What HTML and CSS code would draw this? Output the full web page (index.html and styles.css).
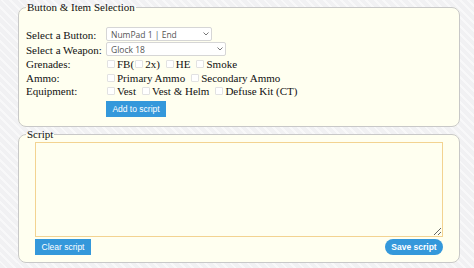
FILE: index.html
```html
<!DOCTYPE html>
<html lang="en">
  <head>
    <meta charset="UTF-8" />
    <meta name="viewport" content="width=device-width, initial-scale=1.0" />
    <title>Script Builder</title>
    <link rel="stylesheet" href="styles.css">
  </head>
  <body>
    <fieldset class="box">
      <legend>Button &amp; Item Selection</legend>
      <div class="form">
        <label class="lbl">Select a Button:</label>
        <div class="sel_wrap">
          <select class="sel sel_btn">
            <option>NumPad 1 | End</option>
          </select>
          <svg class="chev" width="6" height="4" viewBox="0 0 6 4"><path d="M0.5 0.5 L3 3 L5.5 0.5" fill="none" stroke="#777" stroke-width="1"/></svg>
        </div>
        <label class="lbl">Select a Weapon:</label>
        <div class="sel_wrap">
          <select class="sel sel_wpn">
            <option>Glock 18</option>
          </select>
          <svg class="chev" width="6" height="4" viewBox="0 0 6 4"><path d="M0.5 0.5 L3 3 L5.5 0.5" fill="none" stroke="#777" stroke-width="1"/></svg>
        </div>
        <span class="lbl">Grenades:</span>
        <div class="checks">
          <label><input type="checkbox">FB(</label>
          <label><input type="checkbox">2x)</label>
          <label class="sp"><input type="checkbox">HE</label>
          <label class="sp"><input type="checkbox">Smoke</label>
        </div>
        <span class="lbl">Ammo:</span>
        <div class="checks">
          <label><input type="checkbox">Primary Ammo</label>
          <label class="sp"><input type="checkbox">Secondary Ammo</label>
        </div>
        <span class="lbl">Equipment:</span>
        <div class="checks">
          <label><input type="checkbox">Vest</label>
          <label class="sp"><input type="checkbox">Vest &amp; Helm</label>
          <label class="sp"><input type="checkbox">Defuse Kit (CT)</label>
        </div>
        <span></span>
        <div class="add_row">
          <button class="btn">Add to script</button>
        </div>
      </div>
    </fieldset>
    <fieldset class="box box_script">
      <legend>Script</legend>
      <textarea class="script"></textarea>
      <div class="actions">
        <button class="btn">Clear script</button>
        <button class="btn pill">Save script</button>
      </div>
    </fieldset>
  </body>
</html>
```

FILE: styles.css
```css
* {
  box-sizing: border-box;
}

body {
  margin: 0;
  padding: 1px 14px 0 18px;
  background-color: #f1f1f3;
  background-image: repeating-linear-gradient(45deg, rgba(255,255,255,0.5) 0 2px, transparent 2px 6px);
  font-family: "Liberation Serif", "Times New Roman", serif;
  font-size: 11px;
  color: #111;
}

.box {
  margin: 0;
  padding: 0 7px 9px 7px;
  border: 1px solid #c8c8c8;
  border-radius: 8px;
  background-color: #fffff0;
}

.box legend {
  padding: 0 1px;
  line-height: 13px;
  font-size: 11px;
}

.form {
  display: grid;
  grid-template-columns: 80px auto;
  grid-template-rows: 15px 15px 14px 13px 14px auto;
  margin-top: 13px;
  align-items: center;
}

.lbl {
  line-height: 14px;
}

.sel_wrap {
  position: relative;
  height: 15px;
}

.sel {
  appearance: none;
  display: block;
  height: 14px;
  margin: 0;
  padding: 0 2px 0 4px;
  border: 1px solid #d6d6d6;
  border-radius: 2px;
  background-color: #fff;
  font-family: "Open Sans", "DejaVu Sans", sans-serif;
  font-size: 8.5px;
  color: #555;
}

.sel_btn {
  width: 106px;
}

.sel_wpn {
  width: 120px;
}

.chev {
  position: absolute;
  top: 5px;
}

.sel_wrap:nth-child(2) .chev {
  left: 97px;
}

.sel_wrap:nth-child(4) .chev {
  left: 111px;
}

.checks {
  display: flex;
  align-items: center;
  line-height: 14px;
}

.checks label {
  display: flex;
  align-items: center;
}

.checks .sp {
  margin-left: 5px;
}

.checks input {
  appearance: none;
  width: 8px;
  height: 8px;
  margin: 0 2px 0 1px;
  border: 1px solid #e2e2e2;
  border-radius: 1px;
  background-color: #fff;
}

.add_row {
  padding-top: 3px;
}

.btn {
  height: 16px;
  padding: 0;
  border: none;
  background-color: #3498db;
  color: #fff;
  font-family: "Liberation Sans", Arial, sans-serif;
  font-size: 8.5px;
  white-space: nowrap;
  cursor: pointer;
}

.form .btn {
  width: 60px;
}

.box_script {
  margin-top: 1px;
  padding: 0 9px 7px 7px;
}

.script {
  display: block;
  width: 408px;
  height: 95px;
  margin: 1px 0 0 9px;
  border: 1px solid #f3d391;
  background-color: #fffff0;
  resize: vertical;
}

.actions {
  display: flex;
  justify-content: space-between;
  width: 408px;
  margin: 2px 0 0 9px;
}

.actions .btn {
  width: 56px;
}

.actions .pill {
  width: 58px;
  border-radius: 8px;
  font-weight: bold;
}
```
